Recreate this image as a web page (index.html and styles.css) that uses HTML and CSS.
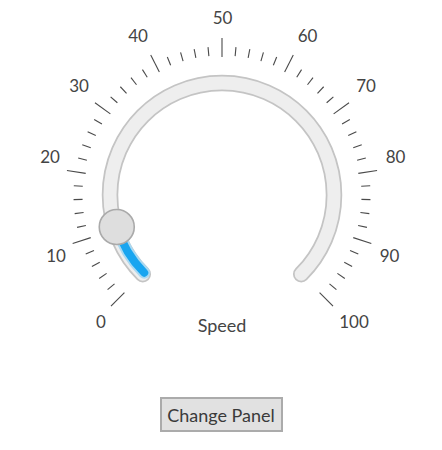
FILE: index.html
```html
<!DOCTYPE html>
<html>
<head>
<meta charset="utf-8">
<link rel="stylesheet" href="styles.css">
</head>
<body>
<div class="panel">
  <svg class="gauge" id="gauge" width="442" height="380" viewBox="0 0 442 380">
    <g id="ticks" class="ticks"></g>
    <g class="labels">
      <text x="101" y="328">0</text>
      <text x="56" y="262">10</text>
      <text x="50" y="163">20</text>
      <text x="79" y="92">30</text>
      <text x="138" y="42">40</text>
      <text x="222.5" y="24">50</text>
      <text x="307.5" y="42">60</text>
      <text x="366" y="92">70</text>
      <text x="395.5" y="163">80</text>
      <text x="389.5" y="262">90</text>
      <text x="354" y="328">100</text>
    </g>
    <path class="track-border" d="" id="trackB"/>
    <path class="track-fill" d="" id="trackF"/>
    <path class="bar-border" d="" id="barB"/>
    <path class="bar-fill" d="" id="barF"/>
    <circle class="knob" id="knob" r="17.5" cx="117" cy="227"/>
    <text class="caption" x="222" y="332" text-anchor="middle">Speed</text>
  </svg>
  <button class="change-btn">Change Panel</button>
</div>
<script src="script.js"></script>
</body>
</html>
```
FILE: styles.css
```css
html, body {
  margin: 0;
  padding: 0;
  background: #ffffff;
}
body {
  width: 442px;
  height: 450px;
  overflow: hidden;
  font-family: Lato, "Open Sans", sans-serif;
}
.panel {
  display: flex;
  flex-direction: column;
  align-items: center;
}
.gauge {
  display: block;
}
.ticks line {
  stroke: #4a4a4a;
  stroke-width: 1.1;
}
.labels text {
  font-family: Lato, sans-serif;
  font-size: 17px;
  fill: #444444;
  text-anchor: middle;
}
.track-border {
  fill: none;
  stroke: #c4c4c4;
  stroke-width: 16.5;
  stroke-linecap: round;
}
.track-fill {
  fill: none;
  stroke: #eeeeee;
  stroke-width: 13;
  stroke-linecap: round;
}
.bar-border {
  fill: none;
  stroke: #a9d9f2;
  stroke-width: 12;
  stroke-linecap: round;
}
.bar-fill {
  fill: none;
  stroke: #18a5f0;
  stroke-width: 8;
  stroke-linecap: round;
}
.knob {
  fill: #dedede;
  stroke: #aaaaaa;
  stroke-width: 1.6;
}
.caption {
  font-family: Lato, sans-serif;
  font-size: 18px;
  fill: #444444;
}
.change-btn {
  margin-top: 17px;
  width: 123px;
  height: 35px;
  padding: 0;
  background: #e1e1e1;
  border: 2px solid #ababab;
  border-radius: 0;
  font-family: Lato, sans-serif;
  font-size: 18px;
  color: #3a3a3a;
}
```
FILE: script.js
```js
(function () {
  var NS = "http://www.w3.org/2000/svg";
  var cx = 222, cy = 195;
  function ang(v) { return (-135 + 2.7 * v) * Math.PI / 180; }
  function pt(v, r) {
    var a = ang(v);
    return [cx + r * Math.sin(a), cy - r * Math.cos(a)];
  }
  var ticks = document.getElementById("ticks");
  for (var v = 0; v <= 100; v += 2) {
    var major = v % 10 === 0;
    var p1 = pt(v, major ? 138 : 139.5);
    var p2 = pt(v, major ? 157 : 148.5);
    var l = document.createElementNS(NS, "line");
    l.setAttribute("x1", p1[0].toFixed(2));
    l.setAttribute("y1", p1[1].toFixed(2));
    l.setAttribute("x2", p2[0].toFixed(2));
    l.setAttribute("y2", p2[1].toFixed(2));
    ticks.appendChild(l);
  }
  function arc(v1, v2, r) {
    var a = pt(v1, r), b = pt(v2, r);
    var large = (v2 - v1) * 2.7 > 180 ? 1 : 0;
    return "M" + a[0].toFixed(2) + " " + a[1].toFixed(2) +
      " A" + r + " " + r + " 0 " + large + " 1 " + b[0].toFixed(2) + " " + b[1].toFixed(2);
  }
  var trackD = arc(0, 100, 112);
  document.getElementById("trackB").setAttribute("d", trackD);
  document.getElementById("trackF").setAttribute("d", trackD);
  var val = 10.4;
  var barD = arc(0, val, 110);
  document.getElementById("barB").setAttribute("d", barD);
  document.getElementById("barF").setAttribute("d", barD);
  var k = pt(val, 110);
  var knob = document.getElementById("knob");
  knob.setAttribute("cx", k[0].toFixed(2));
  knob.setAttribute("cy", k[1].toFixed(2));
})();
```
